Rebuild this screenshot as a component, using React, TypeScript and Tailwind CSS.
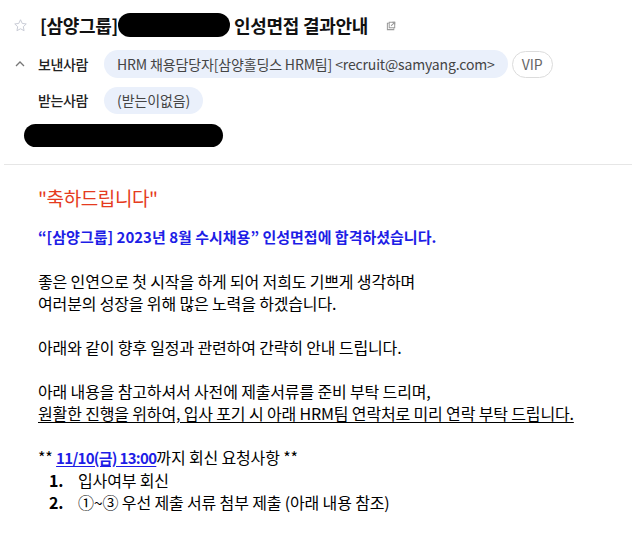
import React from 'react';

const StarIcon = () => (
  <svg width="15" height="15" viewBox="0 0 24 24" fill="none" stroke="#c9ccd6" strokeWidth="1.6" strokeLinejoin="round">
    <path d="M12 2.8l2.8 5.9 6.4.8-4.7 4.4 1.2 6.4L12 17.2l-5.7 3.1 1.2-6.4-4.7-4.4 6.4-.8z" />
  </svg>
);

const PopupIcon = () => (
  <svg width="11" height="11" viewBox="0 0 12 12" fill="none" stroke="#9a9a9a" strokeWidth="1.1">
    <path d="M3 3.5H1.5v7h7V9" />
    <path d="M3.5 2.5h6v6h-6z" />
    <path d="M5.5 6.5l4-4M7 2.5h2.5V5" />
  </svg>
);

const ChevronUp = () => (
  <svg width="10" height="6" viewBox="0 0 10 6" fill="none" stroke="#777" strokeWidth="1.3">
    <path d="M1 5l4-4 4 4" />
  </svg>
);

const Blank = () => <div className="h-[22px]" />;

export default function App() {
  return (
    <div className="w-[632px] h-[542px] bg-white overflow-hidden font-['Noto_Sans_CJK_KR','Noto_Sans',sans-serif] text-[#222]">
      <header>
        <div className="mt-[10px] h-[30px] flex items-center">
          <span className="ml-[13px] w-[15px] flex"><StarIcon /></span>
          <h1 className="ml-[12px] flex items-center text-[18px] font-bold tracking-[-0.3px] text-[#111]">
            <span>[삼양그룹]</span>
            <span className="inline-block w-[112px] h-[24px] rounded-full bg-black" />
            <span className="ml-[4px]">인성면접 결과안내</span>
          </h1>
          <span className="ml-[18px] flex"><PopupIcon /></span>
        </div>

        <div className="mt-[10px] h-[28px] flex items-center">
          <span className="ml-[15px] w-[10px] flex"><ChevronUp /></span>
          <span className="ml-[13px] w-[66px] text-[14px] font-medium tracking-[-0.4px]">보낸사람</span>
          <span className="h-[28px] flex items-center rounded-full bg-[#eaf0fb] px-[13px] text-[14px] text-[#444] tracking-[-0.15px]">
            HRM 채용담당자[삼양홀딩스 HRM팀] &lt;recruit@samyang.com&gt;
          </span>
          <span className="ml-[4px] h-[27px] flex items-center rounded-full border border-[#dcdcdc] px-[9px] text-[14px] text-[#666]">
            VIP
          </span>
        </div>

        <div className="mt-[9px] h-[27px] flex items-center">
          <span className="ml-[38px] w-[66px] text-[14px] font-medium tracking-[-0.4px]">받는사람</span>
          <span className="h-[27px] flex items-center rounded-full bg-[#eaf0fb] px-[13px] text-[14px] text-[#444] tracking-[-0.1px]">
            (받는이없음)
          </span>
        </div>

        <div className="mt-[10px] ml-[24px] w-[199px] h-[23px] rounded-full bg-black" />

        <div className="mt-[17px] ml-[4px] h-px bg-[#e6e6e6]" />
      </header>

      <main className="pl-[38px] pt-[22px] text-[16px] leading-[22px] tracking-[-0.15px] text-black">
        <p className="text-[19px] text-[#e53b20] tracking-[-0.4px]">"축하드립니다"</p>
        <p className="mt-[17px] text-[15px] font-bold text-[#1d1de6] tracking-[0px]">
          “[삼양그룹] 2023년 8월 수시채용” 인성면접에 합격하셨습니다.
        </p>
        <Blank />
        <p>좋은 인연으로 첫 시작을 하게 되어 저희도 기쁘게 생각하며</p>
        <p>여러분의 성장을 위해 많은 노력을 하겠습니다.</p>
        <Blank />
        <p>아래와 같이 향후 일정과 관련하여 간략히 안내 드립니다.</p>
        <Blank />
        <p>아래 내용을 참고하셔서 사전에 제출서류를 준비 부탁 드리며,</p>
        <p className="underline underline-offset-[2px]">원활한 진행을 위하여, 입사 포기 시 아래 HRM팀 연락처로 미리 연락 부탁 드립니다.</p>
        <Blank />
        <p>
          ** <span className="text-[15px] font-bold text-[#1d1de6] tracking-[-0.7px] underline underline-offset-[2px]">11/10(금) 13:00</span>까지 회신 요청사항 **
        </p>
        <ol>
          <li className="flex">
            <span className="ml-[11px] w-[29px] font-bold">1.</span>
            <span>입사여부 회신</span>
          </li>
          <li className="flex">
            <span className="ml-[11px] w-[29px] font-bold">2.</span>
            <span>①~③ 우선 제출 서류 첨부 제출 (아래 내용 참조)</span>
          </li>
        </ol>
      </main>
    </div>
  );
}
